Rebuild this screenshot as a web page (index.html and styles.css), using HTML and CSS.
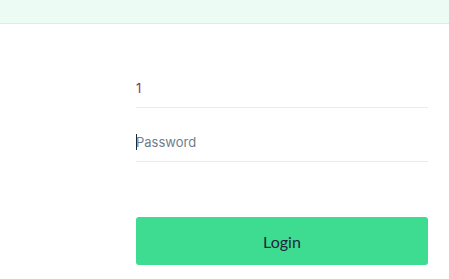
FILE: index.html
```html
<!DOCTYPE html>
<html>
<head>
<meta charset="utf-8">
<link rel="stylesheet" href="styles.css">
</head>
<body>
<header class="topbar"></header>
<main class="page">
  <form class="login-form">
    <input class="field field-user" type="text" value="1">
    <div class="field-wrap">
      <input class="field" type="password" placeholder="Password">
      <span class="caret"></span>
    </div>
    <button class="login-btn" type="button">Login</button>
  </form>
</main>
</body>
</html>
```
FILE: styles.css
```css
html, body {
  margin: 0;
  padding: 0;
  background: #ffffff;
}
body {
  font-family: Inter, "DejaVu Sans", sans-serif;
}
.topbar {
  height: 23px;
  background: #ecfbf4;
  border-bottom: 1px solid #e6e8e8;
}
.page {
  padding: 45px 21px 0 136px;
}
.login-form {
  display: flex;
  flex-direction: column;
  width: 292px;
}
.field {
  width: 100%;
  height: 39px;
  box-sizing: border-box;
  border: none;
  border-bottom: 1px solid #ebebeb;
  padding: 0;
  margin: 0;
  font-family: Inter, sans-serif;
  font-size: 13px;
  color: #9a2a5c;
  background: transparent;
  outline: none;
  display: block;
}
.field-wrap {
  position: relative;
  margin-top: 15px;
}
.caret {
  position: absolute;
  left: 0;
  top: 11px;
  width: 1px;
  height: 16px;
  background: #1e293b;
}
.field::placeholder {
  color: #6f7d8b;
}
.login-btn {
  margin-top: 55px;
  height: 48px;
  border: none;
  border-radius: 3px;
  background: #3ddc91;
  color: #1e293b;
  font-family: Lato, sans-serif;
  font-size: 16px;
  padding: 0;
}
```
